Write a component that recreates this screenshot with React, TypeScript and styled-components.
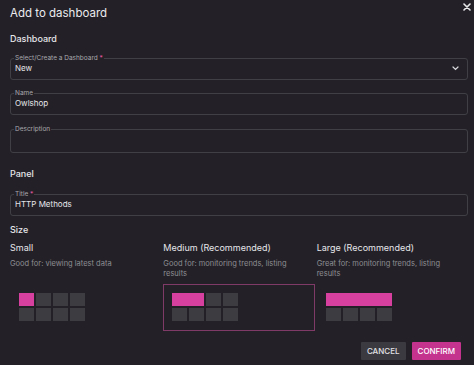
import React from 'react';
import styled, { createGlobalStyle } from 'styled-components';

const GlobalStyle = createGlobalStyle`
  html, body {
    margin: 0;
    padding: 0;
    background: #232127;
  }
  body {
    font-family: Inter, "Noto Sans", sans-serif;
    color: #e6e6ea;
  }
`;

const Dialog = styled.div`
  width: 474px;
  height: 365px;
  box-sizing: border-box;
  padding: 4px 6px 0 10px;
  display: flex;
  flex-direction: column;
  overflow: hidden;
`;

const Header = styled.div`
  display: flex;
  justify-content: space-between;
  align-items: flex-start;
`;

const Title = styled.h2`
  margin: 0;
  font-size: 11.5px;
  line-height: 18px;
  font-weight: 400;
  color: #ececef;
`;

const CloseButton = styled.button`
  border: none;
  background: none;
  padding: 0;
  margin: -1px -3px 0 0;
  width: 8px;
  height: 8px;
  display: flex;
  color: #e8e8ea;
  cursor: pointer;
`;

const SectionTitle = styled.h3<{ $top: number }>`
  margin: ${p => p.$top}px 0 0;
  font-size: 9px;
  line-height: 14px;
  font-weight: 500;
  color: #e6e6ea;
`;

const Fieldset = styled.fieldset<{ $top: number }>`
  margin: ${p => p.$top}px 0 0;
  padding: 0 4px 4px;
  border: 1px solid #403f45;
  border-radius: 3px;
  min-inline-size: 0;
  display: flex;
  flex-direction: column;
`;

const Legend = styled.legend`
  font-size: 6.5px;
  line-height: 8px;
  padding: 0 1px;
  margin-left: -1px;
  color: #a9a8ad;
`;

const Required = styled.span`
  color: #e0559f;
`;

const Input = styled.input`
  border: none;
  outline: none;
  background: transparent;
  padding: 0;
  margin: 0;
  height: 13px;
  font-family: inherit;
  font-size: 8px;
  line-height: 13px;
  color: #e6e6ea;
`;

const Area = styled.textarea`
  border: none;
  outline: none;
  resize: none;
  background: transparent;
  padding: 0;
  margin: 0;
  height: 15px;
  font-family: inherit;
  font-size: 8px;
  color: #e6e6ea;
`;

const SelectValue = styled.div`
  display: flex;
  align-items: center;
  justify-content: space-between;
  height: 13px;
  font-size: 8px;
  line-height: 13px;
  padding-right: 4px;
`;

const Options = styled.div`
  margin-top: 4px;
  display: grid;
  grid-template-columns: repeat(3, 1fr);
  column-gap: 2px;
`;

const Option = styled.div`
  display: flex;
  flex-direction: column;
`;

const OptionTitle = styled.div`
  font-size: 9px;
  line-height: 13px;
  color: #e6e6ea;
`;

const OptionDesc = styled.div`
  margin-top: 5px;
  max-width: 130px;
  min-height: 20px;
  font-size: 7.5px;
  line-height: 10px;
  color: #8e8d93;
`;

const Preview = styled.div<{ $selected?: boolean }>`
  margin-top: 5px;
  padding: 8px 8px 9px;
  border: 1px solid ${p => (p.$selected ? '#7f3a67' : 'transparent')};
  display: flex;
`;

const Grid = styled.div`
  display: grid;
  grid-template-columns: repeat(4, 15px);
  grid-auto-rows: 13px;
  gap: 2px;
`;

const Cell = styled.div<{ $span?: number; $active?: boolean }>`
  grid-column: span ${p => p.$span || 1};
  background: ${p => (p.$active ? '#d8409f' : '#3d3c41')};
`;

const Actions = styled.div`
  margin-top: 11px;
  padding-right: 7px;
  display: flex;
  justify-content: flex-end;
  gap: 6px;
`;

const Button = styled.button<{ $primary?: boolean }>`
  height: 18px;
  padding: 0 6px;
  border: none;
  border-radius: 1px;
  font-family: inherit;
  font-size: 8px;
  font-weight: 500;
  text-transform: uppercase;
  color: ${p => (p.$primary ? '#ffffff' : '#e2e2e6')};
  background: ${p => (p.$primary ? '#c4348f' : '#3b3a40')};
  cursor: pointer;
`;

const sizes = [
  { title: 'Small', desc: 'Good for: viewing latest data', span: 1 },
  { title: 'Medium (Recommended)', desc: 'Good for: monitoring trends, listing results', span: 2, selected: true },
  { title: 'Large (Recommended)', desc: 'Great for: monitoring trends, listing results', span: 4 },
];

const SizeGrid = ({ span }: { span: number }) => {
  const rest = 8 - span;
  return (
    <Grid>
      <Cell $span={span} $active />
      {Array.from({ length: rest }).map((_, i) => (
        <Cell key={i} />
      ))}
    </Grid>
  );
};

const App = () => {
  return (
    <Dialog>
      <GlobalStyle />
      <Header>
        <Title>Add to dashboard</Title>
        <CloseButton aria-label="close">
          <svg width="8" height="8" viewBox="0 0 8 8">
            <path d="M1 1L7 7M7 1L1 7" stroke="currentColor" strokeWidth="1.6" strokeLinecap="round" />
          </svg>
        </CloseButton>
      </Header>

      <SectionTitle $top={10}>Dashboard</SectionTitle>
      <Fieldset $top={8}>
        <Legend>
          Select/Create a Dashboard <Required>*</Required>
        </Legend>
        <SelectValue>
          <span>New</span>
          <svg width="7" height="5" viewBox="0 0 7 5">
            <path d="M1 1L3.5 3.5L6 1" stroke="#d8d8dc" strokeWidth="1.2" fill="none" strokeLinecap="round" />
          </svg>
        </SelectValue>
      </Fieldset>
      <Fieldset $top={9}>
        <Legend>Name</Legend>
        <Input defaultValue="Owlshop" />
      </Fieldset>
      <Fieldset $top={10}>
        <Legend>Description</Legend>
        <Area />
      </Fieldset>

      <SectionTitle $top={14}>Panel</SectionTitle>
      <Fieldset $top={9}>
        <Legend>
          Title <Required>*</Required>
        </Legend>
        <Input defaultValue="HTTP Methods" />
      </Fieldset>

      <SectionTitle $top={7}>Size</SectionTitle>
      <Options>
        {sizes.map(s => (
          <Option key={s.title}>
            <OptionTitle>{s.title}</OptionTitle>
            <OptionDesc>{s.desc}</OptionDesc>
            <Preview $selected={s.selected}>
              <SizeGrid span={s.span} />
            </Preview>
          </Option>
        ))}
      </Options>

      <Actions>
        <Button>Cancel</Button>
        <Button $primary>Confirm</Button>
      </Actions>
    </Dialog>
  );
};

export default App;
